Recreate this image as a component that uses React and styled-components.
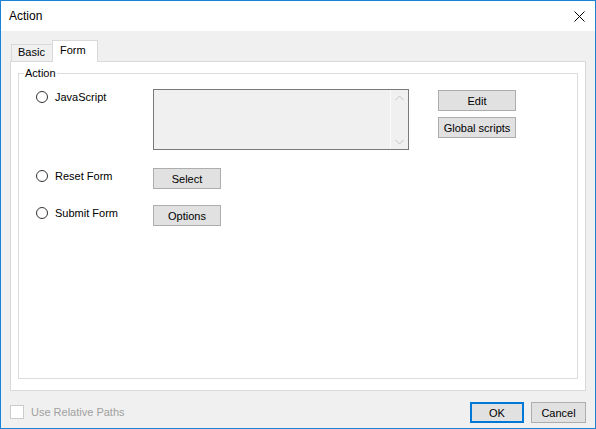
import React from 'react'
import styled, { createGlobalStyle } from 'styled-components'

const GlobalStyle = createGlobalStyle`
  html, body {
    margin: 0;
    padding: 0;
    background: #ffffff;
  }
  * {
    box-sizing: border-box;
  }
`

const Window = styled.div`
  width: 596px;
  height: 429px;
  border: 1px solid #1883d7;
  display: flex;
  flex-direction: column;
  font-family: "Liberation Sans", Arial, sans-serif;
  font-size: 11px;
  color: #000;
`

const TitleBar = styled.div`
  height: 30px;
  background: #fff;
  display: flex;
  align-items: center;
  justify-content: space-between;
  padding: 0 10px 0 8px;
  font-size: 12px;
`

const Body = styled.div`
  flex: 1;
  background: #f0f0f0;
  padding: 9px 9px 0 9px;
  display: flex;
  flex-direction: column;
`

const TabRow = styled.div`
  height: 21px;
  display: flex;
  align-items: flex-end;
  padding-left: 1px;
`

const Tab = styled.div`
  position: relative;
  z-index: ${p => (p.$active ? 1 : 0)};
  height: ${p => (p.$active ? '22px' : '17px')};
  width: ${p => p.$w}px;
  margin-left: ${p => (p.$active ? '-1px' : '0')};
  margin-bottom: ${p => (p.$active ? '-1px' : '0')};
  background: ${p => (p.$active ? '#fff' : '#f0f0f0')};
  border: 1px solid #d9d9d9;
  border-bottom: none;
  padding: ${p => (p.$active ? '3px 0 0 7px' : '1px 0 0 6px')};
`

const Page = styled.div`
  height: 330px;
  background: #fff;
  border: 1px solid #d9d9d9;
  padding: 5px 7px 11px 7px;
  display: flex;
`

const Group = styled.fieldset`
  flex: 1;
  margin: 0;
  border: 1px solid #dcdcdc;
  padding: 9px 0 0 17px;
  min-width: 0;
`

const Legend = styled.legend`
  padding: 0 1px;
  margin-left: -12px;
  line-height: 13px;
`

const Row = styled.div`
  display: flex;
  align-items: flex-start;
  margin-top: ${p => p.$top || 0}px;
`

const Option = styled.label`
  width: 117px;
  height: 16px;
  display: flex;
  align-items: center;
  gap: 7px;
`

const Radio = styled.span`
  width: 12px;
  height: 12px;
  border: 1px solid #333;
  border-radius: 50%;
  background: #fff;
`

const ScriptBox = styled.div`
  width: 256px;
  height: 61px;
  border: 1px solid #7a7a7a;
  background: #f0f0f0;
  display: flex;
  justify-content: flex-end;
`

const ScrollTrack = styled.div`
  width: 18px;
  border-left: 1px solid #fafafa;
  display: flex;
  flex-direction: column;
  justify-content: space-between;
  align-items: center;
  padding: 5px 0 4px;
`

const Button = styled.div`
  width: ${p => p.$w || 68}px;
  height: ${p => p.$h || 21}px;
  background: #e1e1e1;
  border: ${p => (p.$default ? '2px solid #0078d7' : '1px solid #adadad')};
  display: flex;
  align-items: center;
  justify-content: center;
`

const SideButtons = styled.div`
  margin-left: 29px;
  margin-top: 1px;
  display: flex;
  flex-direction: column;
  gap: 6px;
`

const Footer = styled.div`
  flex: 1;
  display: flex;
  align-items: flex-start;
  justify-content: space-between;
  padding-top: 11px;
`

const Check = styled.label`
  display: flex;
  align-items: center;
  gap: 7px;
  padding-top: 3px;
  color: #a0a0a0;
`

const CheckBox = styled.span`
  width: 14px;
  height: 14px;
  border: 1px solid #cccccc;
  background: #fff;
`

const Actions = styled.div`
  display: flex;
  gap: 7px;
`

const Chevron = ({ up }) => (
  <svg width="9" height="6" viewBox="0 0 9 6">
    <path
      d={up ? 'M0.5 5 L4.5 1 L8.5 5' : 'M0.5 1 L4.5 5 L8.5 1'}
      fill="none"
      stroke="#c4c4c4"
      strokeWidth="1"
    />
  </svg>
)

function App() {
  return (
    <>
      <GlobalStyle />
      <Window>
        <TitleBar>
          <span>Action</span>
          <svg width="11" height="11" viewBox="0 0 11 11">
            <path d="M0.5 0.5 L10.5 10.5 M10.5 0.5 L0.5 10.5" stroke="#000" strokeWidth="1" />
          </svg>
        </TitleBar>
        <Body>
          <TabRow>
            <Tab $w={42}>Basic</Tab>
            <Tab $w={46} $active>Form</Tab>
          </TabRow>
          <Page>
            <Group>
              <Legend>Action</Legend>
              <Row>
                <Option><Radio />JavaScript</Option>
                <ScriptBox>
                  <ScrollTrack>
                    <Chevron up />
                    <Chevron />
                  </ScrollTrack>
                </ScriptBox>
                <SideButtons>
                  <Button $w={78} $h={21}>Edit</Button>
                  <Button $w={78} $h={21}>Global scripts</Button>
                </SideButtons>
              </Row>
              <Row $top={18}>
                <Option><Radio />Reset Form</Option>
                <Button>Select</Button>
              </Row>
              <Row $top={16}>
                <Option><Radio />Submit Form</Option>
                <Button>Options</Button>
              </Row>
            </Group>
          </Page>
          <Footer>
            <Check><CheckBox />Use Relative Paths</Check>
            <Actions>
              <Button $w={54} $default>OK</Button>
              <Button $w={55}>Cancel</Button>
            </Actions>
          </Footer>
        </Body>
      </Window>
    </>
  )
}

export default App
